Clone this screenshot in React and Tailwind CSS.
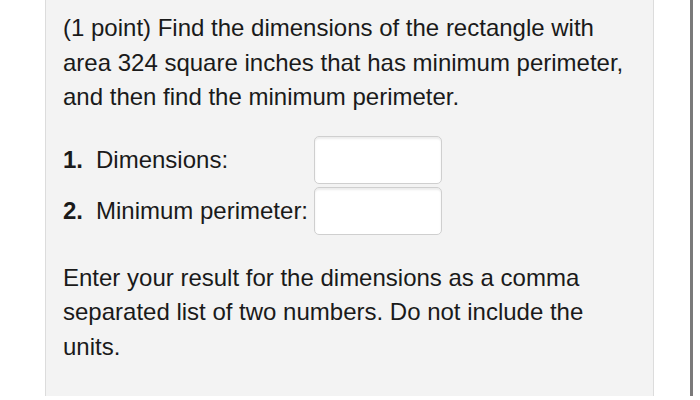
export default function App() {
  const items = [
    { n: '1.', label: 'Dimensions:' },
    { n: '2.', label: 'Minimum perimeter:' },
  ];

  return (
    <div className="flex h-[400px] w-[700px] bg-white font-['Liberation_Sans',Arial,sans-serif] text-[#1a1a1a]">
      <div className="ml-[45px] h-[396px] w-[609px] border-x border-[#dcdcdc] bg-[#f3f3f3] pl-[17px] pr-[23px] pt-[11px]">
        <p className="text-[24px] leading-[34.5px]">
          (1 point) Find the dimensions of the rectangle with area 324 square inches that has minimum perimeter, and then find the minimum perimeter.
        </p>

        <div className="mt-[21px] grid grid-cols-[auto_auto] justify-start gap-y-[3px]">
          {items.map(it => (
            <div key={it.n} className="contents">
              <div className="flex items-center pr-[6px] text-[24px]">
                <span className="w-[33px] font-bold">{it.n}</span>
                <span>{it.label}</span>
              </div>
              <input
                type="text"
                className="h-[48px] w-[128px] rounded-[5px] border border-[#cfcfcf] bg-white shadow-[inset_0_2px_2px_rgba(0,0,0,0.08)] outline-none"
              />
            </div>
          ))}
        </div>

        <p className="mt-[26px] text-[24px] leading-[34.5px]">
          Enter your result for the dimensions as a comma separated list of two numbers. Do not include the units.
        </p>
      </div>
      <div className="ml-[36px] h-[396px] w-[3px] bg-[#7a7a7a]" />
    </div>
  );
}
